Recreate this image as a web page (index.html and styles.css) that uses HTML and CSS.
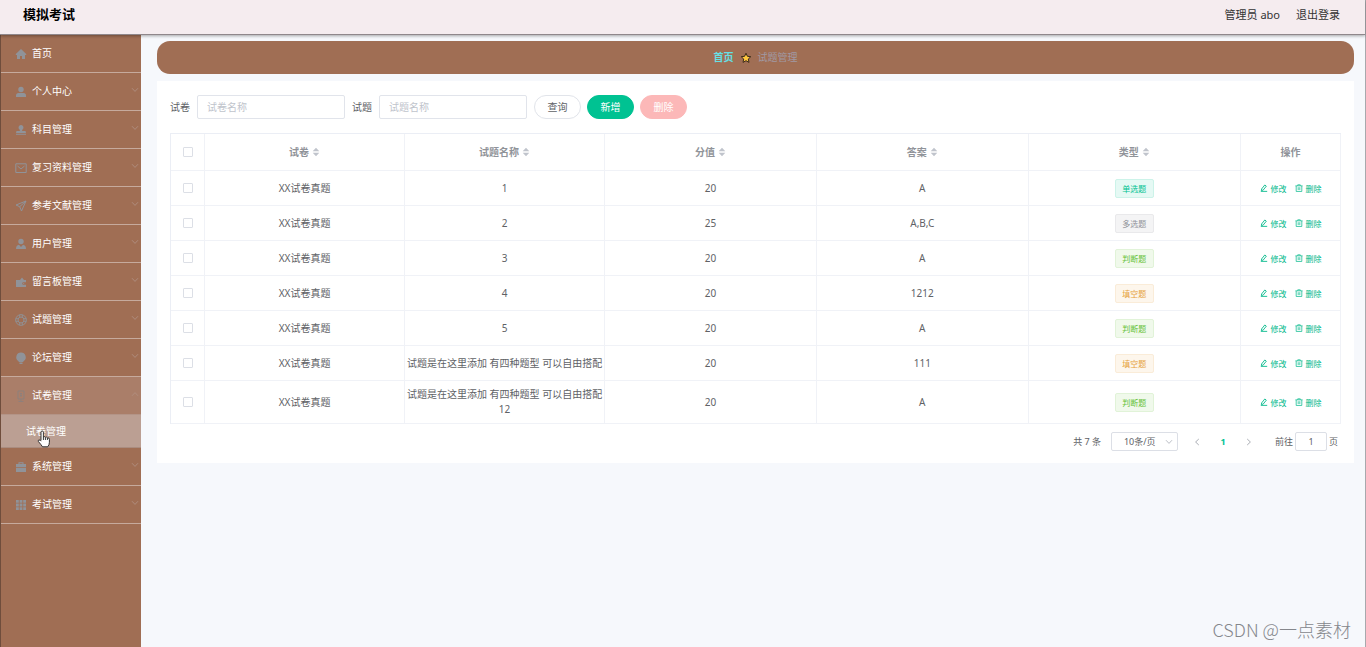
FILE: index.html
```html
<!DOCTYPE html>
<html lang="zh-CN">
<head>
<meta charset="utf-8">
<meta name="viewport" content="width=device-width, initial-scale=1">
<title>模拟考试</title>
<link rel="stylesheet" href="styles.css">
</head>
<body>
<svg class="defs" aria-hidden="true">
  <symbol id="chev" viewBox="0 0 8 8"><path d="M1 2.2 4 5.4 7 2.2" fill="none" stroke="currentColor" stroke-width="0.9"/></symbol>
  <symbol id="edit" viewBox="0 0 10 10"><path d="M2 6.2 6 1.2 7.900 2.700 4 7.600 1.700 8.200ZM1 9.200h8" fill="none" stroke="currentColor" stroke-width="1.1"/></symbol>
  <symbol id="trash" viewBox="0 0 10 10"><path d="M.5 2.300h9M3.400 2.200V1h3.200v1.200M1.500 2.500V9.300h7V2.500M4 4v3.600M6 4v3.600" fill="none" stroke="currentColor" stroke-width="0.9"/></symbol>
  <symbol id="sort" viewBox="0 0 8 10"><path d="M4 .8 7.300 4.300H.7ZM4 9.200 7.300 5.700H.7Z" fill="currentColor"/></symbol>
</svg>
<div class="app">
  <header class="topbar">
    <h1 class="brand">模拟考试</h1>
    <div class="account"><span>管理员 abo</span><button class="logout" type="button">退出登录</button></div>
  </header>
  <div class="body">
    <nav class="sidebar">
      <a class="item" href="#"><svg class="icon" viewBox="0 0 12 12"><path d="M6 1 .8 6v1H2v4h3V8h2v3h3V7h1.200V6Z" fill="currentColor"/></svg><span>首页</span></a>
      <a class="item" href="#"><svg class="icon" viewBox="0 0 12 12"><circle cx="6" cy="3.500" r="2.700" fill="currentColor"/><path d="M1 11V9.500Q1 7 3.500 7h5Q11 7 11 9.500V11Z" fill="currentColor"/></svg><span>个人中心</span><svg class="arrow"><use href="#chev"/></svg></a>
      <a class="item" href="#"><svg class="icon" viewBox="0 0 12 12"><path d="M6 1a2.500 2.500 0 0 1 1.500 4.500L7 7h3.500l.5 2H1l.5-2H5l-.5-1.500A2.500 2.500 0 0 1 6 1ZM1 9.700h10v1H1Z" fill="currentColor"/></svg><span>科目管理</span><svg class="arrow"><use href="#chev"/></svg></a>
      <a class="item" href="#"><svg class="icon" viewBox="0 0 12 12"><path d="M.8 1.800h10.400v8.700H.8ZM2.500 4 6 7l3.500-3" fill="none" stroke="currentColor"/></svg><span>复习资料管理</span><svg class="arrow"><use href="#chev"/></svg></a>
      <a class="item" href="#"><svg class="icon" viewBox="0 0 12 12"><path d="M11 1 1 5l3.700 1.700L6.500 11ZM11 1 4.700 6.700" fill="none" stroke="currentColor"/></svg><span>参考文献管理</span><svg class="arrow"><use href="#chev"/></svg></a>
      <a class="item" href="#"><svg class="icon" viewBox="0 0 12 12"><circle cx="6" cy="3.500" r="2.700" fill="currentColor"/><path d="M1 11Q1 7 4 6.700L6 9l2-2.300Q11 7 11 11Z" fill="currentColor"/></svg><span>用户管理</span><svg class="arrow"><use href="#chev"/></svg></a>
      <a class="item" href="#"><svg class="icon" viewBox="0 0 12 12"><path d="M1 4h4l2-2.500L9 4h2v2.200H8.500a1.300 1.300 0 0 0 0 2.600H11V11H1Z" fill="currentColor"/><circle cx="8.700" cy="7.500" r=".6" fill="currentColor"/></svg><span>留言板管理</span><svg class="arrow"><use href="#chev"/></svg></a>
      <a class="item" href="#"><svg class="icon" viewBox="0 0 12 12"><g fill="none" stroke="currentColor" stroke-width="0.9"><circle cx="6" cy="6" r="5.400"/><circle cx="6" cy="6" r="3"/><path d="M4.700.9v2.500M7.300.9v2.500M4.700 8.600v2.500M7.300 8.600v2.500M.9 4.700h2.500M.9 7.300h2.500M8.600 4.700h2.500M8.600 7.300h2.500"/></g></svg><span>试题管理</span><svg class="arrow"><use href="#chev"/></svg></a>
      <a class="item" href="#"><svg class="icon" viewBox="0 0 12 12"><path d="M6 .5a4.700 4.700 0 0 1 2.800 8.500L8 10H4L3.200 9A4.700 4.700 0 0 1 6 .5ZM4.500 10.600h3V12h-3Z" fill="currentColor"/></svg><span>论坛管理</span><svg class="arrow"><use href="#chev"/></svg></a>
      <a class="item open" href="#"><svg class="icon" viewBox="0 0 12 12"><path d="M3 1h6v8H3ZM6 9v2.500M3.500 11.400h5M5 3.500h2M5 5.500h2M6 3v4" fill="none" stroke="currentColor"/></svg><span>试卷管理</span><svg class="arrow up"><use href="#chev"/></svg></a>
      <a class="subitem" href="#">试卷管理</a>
      <a class="item" href="#"><svg class="icon" viewBox="0 0 12 12"><path d="M1 3h2.500V1.300h5V3H11v3.300H1ZM4.500 3h3v-.8h-3ZM1 7h10v4H1Z" fill="currentColor" fill-rule="evenodd"/></svg><span>系统管理</span><svg class="arrow"><use href="#chev"/></svg></a>
      <a class="item" href="#"><svg class="icon" viewBox="0 0 12 12"><path d="M1 1h2.800v2.800H1ZM4.600 1h2.800v2.800H4.600ZM8.200 1H11v2.800H8.200ZM1 4.600h2.800v2.800H1ZM4.600 4.600h2.800v2.800H4.600ZM8.200 4.600H11v2.800H8.200ZM1 8.200h2.800V11H1ZM4.600 8.200h2.800V11H4.600ZM8.200 8.200H11V11H8.200Z" fill="currentColor"/></svg><span>考试管理</span><svg class="arrow"><use href="#chev"/></svg></a>
    </nav>
    <main class="main">
      <div class="crumbs">
        <a class="crumb-home" href="#">首页</a>
        <svg class="star" viewBox="0 0 12 12"><path d="M6 1.200 7.400 4.300l3.400.4-2.500 2.300.7 3.400L6 8.700 3 10.400l.7-3.400L1.200 4.700l3.400-.4Z" fill="#ffc83d" stroke="#3a2a1c" stroke-width="1"/></svg>
        <span class="crumb-here">试题管理</span>
      </div>
      <section class="card">
        <form class="filters">
          <label for="paper">试卷</label><input class="field" id="paper" type="text" placeholder="试卷名称">
          <label for="question">试题</label><input class="field" id="question" type="text" placeholder="试题名称">
          <div class="actions">
            <button class="btn" type="button">查询</button>
            <button class="btn primary" type="button">新增</button>
            <button class="btn danger" type="button" disabled>删除</button>
          </div>
        </form>
        <table class="grid">
          <colgroup><col class="c-check"><col class="c-text"><col class="c-text"><col class="c-wide"><col class="c-wide"><col><col class="c-ops"></colgroup>
          <thead><tr>
            <th><input class="check" type="checkbox" aria-label="全选"></th>
            <th>试卷<svg class="sort"><use href="#sort"/></svg></th>
            <th>试题名称<svg class="sort"><use href="#sort"/></svg></th>
            <th>分值<svg class="sort"><use href="#sort"/></svg></th>
            <th>答案<svg class="sort"><use href="#sort"/></svg></th>
            <th>类型<svg class="sort"><use href="#sort"/></svg></th>
            <th>操作</th>
          </tr></thead>
          <tbody>
            <tr><td><input class="check" type="checkbox" aria-label="选择 1"></td><td>XX试卷真题</td><td>1</td><td>20</td><td>A</td><td><span class="tag single">单选题</span></td><td><div class="ops"><button class="op" type="button"><svg><use href="#edit"/></svg>修改</button><button class="op" type="button"><svg><use href="#trash"/></svg>删除</button></div></td></tr>
            <tr><td><input class="check" type="checkbox" aria-label="选择 2"></td><td>XX试卷真题</td><td>2</td><td>25</td><td>A,B,C</td><td><span class="tag multi">多选题</span></td><td><div class="ops"><button class="op" type="button"><svg><use href="#edit"/></svg>修改</button><button class="op" type="button"><svg><use href="#trash"/></svg>删除</button></div></td></tr>
            <tr><td><input class="check" type="checkbox" aria-label="选择 3"></td><td>XX试卷真题</td><td>3</td><td>20</td><td>A</td><td><span class="tag judge">判断题</span></td><td><div class="ops"><button class="op" type="button"><svg><use href="#edit"/></svg>修改</button><button class="op" type="button"><svg><use href="#trash"/></svg>删除</button></div></td></tr>
            <tr><td><input class="check" type="checkbox" aria-label="选择 4"></td><td>XX试卷真题</td><td>4</td><td>20</td><td>1212</td><td><span class="tag blank">填空题</span></td><td><div class="ops"><button class="op" type="button"><svg><use href="#edit"/></svg>修改</button><button class="op" type="button"><svg><use href="#trash"/></svg>删除</button></div></td></tr>
            <tr><td><input class="check" type="checkbox" aria-label="选择 5"></td><td>XX试卷真题</td><td>5</td><td>20</td><td>A</td><td><span class="tag judge">判断题</span></td><td><div class="ops"><button class="op" type="button"><svg><use href="#edit"/></svg>修改</button><button class="op" type="button"><svg><use href="#trash"/></svg>删除</button></div></td></tr>
            <tr><td><input class="check" type="checkbox" aria-label="选择 6"></td><td>XX试卷真题</td><td>试题是在这里添加 有四种题型 可以自由搭配</td><td>20</td><td>111</td><td><span class="tag blank">填空题</span></td><td><div class="ops"><button class="op" type="button"><svg><use href="#edit"/></svg>修改</button><button class="op" type="button"><svg><use href="#trash"/></svg>删除</button></div></td></tr>
            <tr><td><input class="check" type="checkbox" aria-label="选择 7"></td><td>XX试卷真题</td><td>试题是在这里添加 有四种题型 可以自由搭配12</td><td>20</td><td>A</td><td><span class="tag judge">判断题</span></td><td><div class="ops"><button class="op" type="button"><svg><use href="#edit"/></svg>修改</button><button class="op" type="button"><svg><use href="#trash"/></svg>删除</button></div></td></tr>
          </tbody>
        </table>
        <div class="pager">
          <span class="total">共 7 条</span>
          <div class="size"><select class="size-select" aria-label="每页条数"><option>10条/页</option></select><svg class="size-arrow"><use href="#chev"/></svg></div>
          <button class="page" type="button" aria-label="上一页"><svg class="left"><use href="#chev"/></svg></button>
          <button class="page current" type="button">1</button>
          <button class="page" type="button" aria-label="下一页"><svg class="right"><use href="#chev"/></svg></button>
          <div class="jump"><label for="jump">前往</label><input class="jump-field" id="jump" type="text" value="1"><span>页</span></div>
        </div>
      </section>
    </main>
  </div>
  <svg class="pointer" viewBox="0 0 14 18" aria-hidden="true"><path d="M4 10.500V2.200a1.200 1.200 0 0 1 2.400 0V7q1.200-.8 2 .3 1.300-.6 2 .5 1.900-.3 2 1.500v3q0 2.500-1.700 4.500H5.500Q4 14.500 1.400 11.500q-.6-1.300.6-1.600 1.100 0 2 1.300M6.400 7v3M8.400 7.500V10M10.400 8v2" fill="#fff" stroke="#222" stroke-width="0.900"/></svg>
  <div class="watermark">CSDN @一点素材</div>
</div>
</body>
</html>
```
FILE: styles.css
```css
* { box-sizing: border-box; }

body {
  margin: 0;
  font: 10px/15px "Noto Sans", "Noto Sans CJK SC", sans-serif;
  color: #606266;
  background: #f6f8fc;
}

button, input, select { font: inherit; color: inherit; margin: 0; }
a { color: inherit; text-decoration: none; }
svg { display: block; }
.defs { position: absolute; width: 0; height: 0; }

.app {
  position: relative;
  min-height: 100vh;
  display: flex;
  flex-direction: column;
  border-right: 1px solid #a8a9ad;
}

.topbar {
  position: relative;
  display: flex;
  justify-content: space-between;
  align-items: center;
  height: 35px;
  padding: 0 25px 6px 23px;
  background: #f5ecef;
  border-bottom: 1px solid #8f878b;
  box-shadow: 0 1px 3px #00000055;
}
.brand { margin: 0; font-size: 13px; line-height: 20px; color: #000; }
.account { display: flex; gap: 16px; font-size: 11px; color: #333; }
.logout { padding: 0; border: 0; background: none; }

.body { flex: 1; display: flex; }

.sidebar {
  flex: none;
  width: 141px;
  background: #a06e54;
  border-left: 1px solid #6f4d3c;
  color: #fff;
}
.item {
  display: flex;
  align-items: center;
  gap: 5px;
  height: 38px;
  padding: 0 2px 0 14px;
  border-bottom: 1px solid #c6aa9d;
}
.item.open { background: #aa7e69; border-bottom-color: #b39487; }
.icon { width: 12px; height: 12px; color: #909399; }
.open .icon { color: #8d807d; }
.arrow { width: 8px; height: 8px; margin: 0 0 4px auto; color: #b08f80; }
.arrow.up { transform: rotate(180deg); }
.subitem {
  display: flex;
  align-items: center;
  height: 33px;
  padding-left: 25px;
  background: #bb9f93;
  border-bottom: 1px solid #aa8c7f;
}

.main { flex: 1; min-width: 0; padding: 6px 11px 24px 16px; }

.crumbs {
  display: flex;
  align-items: center;
  justify-content: center;
  gap: 6px;
  height: 33px;
  margin-bottom: 7px;
  border-radius: 13px;
  background: #a06e54;
}
.crumb-home { color: #66e0e5; font-weight: 700; }
.crumb-here { color: #a099a3; }
.star { width: 12px; height: 12px; }

.card { padding: 14px 13px 12px; background: #fff; }

.filters { display: flex; align-items: center; gap: 7px; margin-bottom: 14px; }
.actions { display: flex; gap: 6px; }
.field {
  width: 148px;
  height: 24px;
  padding: 0 9px;
  border: 1px solid #e1e4eb;
  border-radius: 2px;
  background: #fff;
}
.field::placeholder { color: #c0c4cc; }
.btn {
  width: 47px;
  height: 24px;
  padding: 0;
  border: 1px solid #e1e4ea;
  border-radius: 12px;
  background: #fff;
}
.btn.primary { background: #00c292; border-color: #00c292; color: #fff; }
.btn.danger { background: #fcb8b8; border-color: #fcb8b8; color: #fff; }

.grid {
  width: 100%;
  table-layout: fixed;
  border-spacing: 0;
  border: 1px solid #ebeef5;
  border-width: 1px 0 0 1px;
}
.c-check { width: 34px; }
.c-text { width: 17.1%; }
.c-wide { width: 18.1%; }
.c-ops { width: 100px; }
.grid th, .grid td {
  height: 35px;
  padding: 6px 0;
  border: 1px solid #f0f2f7;
  border-width: 0 1px 1px 0;
  text-align: center;
  vertical-align: middle;
}
.grid th { height: 37px; color: #909399; font-weight: 700; }
.sort { display: inline-block; width: 8px; height: 10px; margin-left: 3px; vertical-align: -1px; color: #c0c4cc; }
.check {
  display: block;
  appearance: none;
  width: 10px;
  height: 10px;
  margin: 0 auto;
  border: 1px solid #dcdfe6;
  border-radius: 1px;
  background: #fff;
}

.tag {
  display: block;
  width: 39px;
  margin: 0 auto;
  border: 1px solid;
  border-radius: 2px;
  font-size: 8px;
  line-height: 17px;
}
.single { color: #00c292; background: #e5f9f4; border-color: #ccf3e9; }
.multi { color: #909399; background: #f4f4f5; border-color: #e9e9eb; }
.judge { color: #67c23a; background: #f0f9eb; border-color: #e1f3d8; }
.blank { color: #e6a23c; background: #fdf6ec; border-color: #faecd8; }

.ops { display: flex; justify-content: center; gap: 8px; }
.op {
  display: flex;
  align-items: center;
  gap: 3px;
  padding: 0;
  border: 0;
  background: none;
  color: #00b88a;
  font-size: 8px;
}
.op svg { width: 8px; height: 8px; }

.pager {
  display: flex;
  align-items: center;
  justify-content: flex-end;
  margin-top: 8px;
  padding-right: 3px;
  font-size: 9px;
}
.total { margin-right: 10px; }
.size { position: relative; margin-right: 6px; }
.size-select {
  appearance: none;
  display: block;
  width: 67px;
  height: 19px;
  padding: 0 12px;
  border: 1px solid #dcdfe6;
  border-radius: 2px;
  background: #fff;
}
.size-arrow { position: absolute; right: 5px; top: 6px; width: 8px; height: 8px; color: #b4b8c0; }
.page {
  display: flex;
  align-items: center;
  justify-content: center;
  width: 26px;
  height: 19px;
  padding: 0;
  border: 0;
  background: none;
}
.page svg { width: 8px; height: 8px; color: #a0a4ac; }
.left { transform: rotate(90deg); }
.right { transform: rotate(-90deg); }
.page.current { color: #00c292; font-weight: 700; }
.jump { display: flex; align-items: center; gap: 2px; margin-left: 13px; }
.jump-field {
  width: 32px;
  height: 19px;
  padding: 0;
  border: 1px solid #dcdfe6;
  border-radius: 2px;
  background: #fff;
  text-align: center;
}

.pointer { position: absolute; left: 37px; top: 430px; width: 14px; height: 18px; }
.watermark {
  position: absolute;
  right: 14px;
  bottom: 6px;
  font-family: "Noto Sans CJK SC", sans-serif;
  font-size: 18px;
  font-weight: 300;
  line-height: 24px;
  color: #85878c;
}
```
